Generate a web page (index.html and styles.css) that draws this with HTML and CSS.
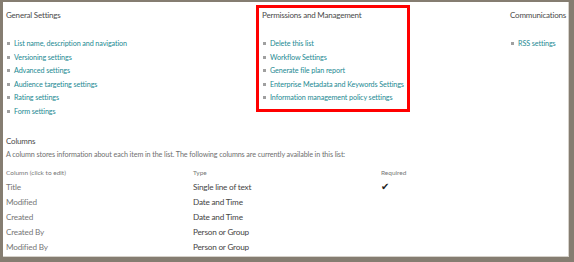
FILE: index.html
```html
<!DOCTYPE html>
<html lang="en">
<head>
  <meta charset="UTF-8" />
  <title>List Settings</title>
  <link rel="stylesheet" href="styles.css">
</head>
<body>
  <div class="frame">

    <div class="settings">
      <div class="group">
        <h3>General Settings</h3>
        <ul>
          <li><a href="#">List name, description and navigation</a></li>
          <li><a href="#">Versioning settings</a></li>
          <li><a href="#">Advanced settings</a></li>
          <li><a href="#">Audience targeting settings</a></li>
          <li><a href="#">Rating settings</a></li>
          <li><a href="#">Form settings</a></li>
        </ul>
      </div>
      <div class="group">
        <div class="highlight">
          <h3>Permissions and Management</h3>
          <ul>
            <li><a href="#">Delete this list</a></li>
            <li><a href="#">Workflow Settings</a></li>
            <li><a href="#">Generate file plan report</a></li>
            <li><a href="#">Enterprise Metadata and Keywords Settings</a></li>
            <li><a href="#">Information management policy settings</a></li>
          </ul>
        </div>
      </div>
      <div class="group">
        <h3>Communications</h3>
        <ul>
          <li><a href="#">RSS settings</a></li>
        </ul>
      </div>
    </div>

    <div class="columns">
      <h3>Columns</h3>
      <p class="desc">A column stores information about each item in the list. The following columns are currently available in this list:</p>
      <div class="col-table">
        <div class="row head">
          <span>Column (click to edit)</span>
          <span>Type</span>
          <span>Required</span>
        </div>
        <div class="row">
          <span class="name">Title</span>
          <span class="type">Single line of text</span>
          <span class="req">&#10004;</span>
        </div>
        <div class="row">
          <span class="name">Modified</span>
          <span class="type">Date and Time</span>
          <span></span>
        </div>
        <div class="row">
          <span class="name">Created</span>
          <span class="type">Date and Time</span>
          <span></span>
        </div>
        <div class="row">
          <span class="name">Created By</span>
          <span class="type">Person or Group</span>
          <span></span>
        </div>
        <div class="row">
          <span class="name">Modified By</span>
          <span class="type">Person or Group</span>
          <span></span>
        </div>
      </div>
    </div>

  </div>
</body>
</html>
```
FILE: styles.css
```css
* {
  margin: 0;
  padding: 0;
  box-sizing: border-box;
}

html, body {
  width: 574px;
  height: 262px;
  overflow: hidden;
  background: #fff;
  font-family: 'Lato', sans-serif;
}

.frame {
  width: 574px;
  height: 262px;
  border-style: solid;
  border-color: #857d71;
  border-width: 2px 5px 5px 3px;
  padding: 0 0 0 3px;
  background: #fff;
  box-shadow: inset -1px -1px 0 #d6d2cb;
}

.settings {
  display: grid;
  grid-template-columns: 250px 254px 1fr;
}

.group h3,
.columns h3 {
  font-size: 8px;
  letter-spacing: -0.2px;
  font-weight: 400;
  color: #4a4a4a;
  line-height: 12px;
}

.group > h3 {
  margin-top: 7px;
}

.highlight {
  width: fit-content;
  margin-top: 3px;
  border: 3px solid #f00;
  padding: 1px 3px 4px 3px;
}

.group ul {
  list-style: none;
  margin-top: 16px;
}

.group li {
  display: flex;
  align-items: center;
  gap: 4px;
  height: 13.5px;
  font-size: 7.2px;
  letter-spacing: -0.1px;
}

.group li::before {
  content: '';
  flex-shrink: 0;
  width: 3px;
  height: 3px;
  margin-left: 1px;
  background: #a0a0a0;
}

.group a {
  color: #1c8a93;
  text-decoration: none;
  white-space: nowrap;
}

.columns {
  margin-top: 17px;
}

.desc {
  margin-top: 2px;
  font-size: 7.2px;
  letter-spacing: -0.1px;
  color: #707070;
  line-height: 11px;
}

.col-table {
  margin-top: 5px;
}

.row {
  display: grid;
  grid-template-columns: 187px 188px 1fr;
  height: 15.2px;
  align-items: center;
  font-size: 8.2px;
  letter-spacing: -0.2px;
}

.row.head {
  height: 14px;
  font-size: 6.5px;
  letter-spacing: 0;
  color: #777;
}

.name {
  color: #777;
}

.type {
  color: #444;
}

.req {
  color: #222;
  font-size: 10px;
  font-family: 'DejaVu Sans', sans-serif;
}
```
